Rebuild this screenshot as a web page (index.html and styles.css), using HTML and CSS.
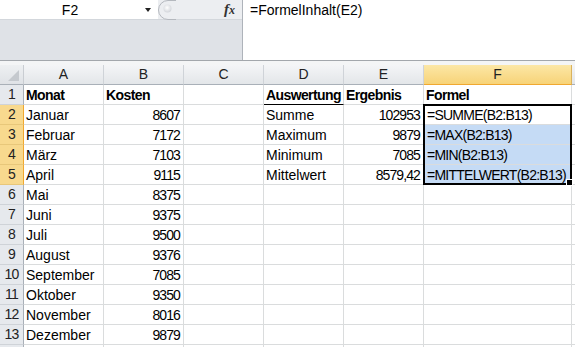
FILE: index.html
```html
<!DOCTYPE html>
<html lang="de">
<head>
<meta charset="utf-8">
<title>Formeln</title>
<link rel="stylesheet" href="styles.css">
</head>
<body>
<div class="app">
  <div class="fbar">
    <div class="fbar-left">
      <div class="fbar-top">
        <div class="namebox"><span class="name">F2</span><span class="drop"></span></div>
        <div class="fxzone">
          <svg class="knob" width="18" height="20" viewBox="0 0 18 20">
            <defs>
              <radialGradient id="kg" cx="0.45" cy="0.4" r="0.6">
                <stop offset="0" stop-color="#ffffff"/>
                <stop offset="1" stop-color="#d2d5da"/>
              </radialGradient>
            </defs>
            <path d="M18 0.5 H10 A9.5 9.5 0 0 0 10 19.5 H18" fill="#eceef1" stroke="#b4b8be"/>
            <circle cx="9.5" cy="8.5" r="4" fill="url(#kg)"/>
          </svg>
          <span class="fx">f<span class="fxx">x</span></span>
        </div>
      </div>
    </div>
    <div class="fbar-text">=FormelInhalt(E2)</div>
  </div>
  <div class="gap"></div>
  <div class="sheet">
    <div class="corner"><span class="tri"></span></div>
    <div class="ch">A</div><div class="ch">B</div><div class="ch">C</div><div class="ch">D</div><div class="ch">E</div><div class="ch sel">F</div><div class="ch"></div>

    <div class="rh">1</div>
    <div class="c b">Monat</div><div class="c b">Kosten</div><div class="c"></div><div class="c b uline">Auswertung</div><div class="c b">Ergebnis</div><div class="c b">Formel</div><div class="c"></div>

    <div class="rh sel">2</div>
    <div class="c">Januar</div><div class="c n">8607</div><div class="c"></div><div class="c">Summe</div><div class="c n">102953</div><div class="c f">=SUMME(B2:B13)</div><div class="c"></div>

    <div class="rh sel">3</div>
    <div class="c">Februar</div><div class="c n">7172</div><div class="c"></div><div class="c">Maximum</div><div class="c n">9879</div><div class="c f hl">=MAX(B2:B13)</div><div class="c"></div>

    <div class="rh sel">4</div>
    <div class="c">März</div><div class="c n">7103</div><div class="c"></div><div class="c">Minimum</div><div class="c n">7085</div><div class="c f hl">=MIN(B2:B13)</div><div class="c"></div>

    <div class="rh sel">5</div>
    <div class="c">April</div><div class="c n">9115</div><div class="c"></div><div class="c">Mittelwert</div><div class="c n">8579,42</div><div class="c f hl">=MITTELWERT(B2:B13)</div><div class="c"></div>

    <div class="rh">6</div>
    <div class="c">Mai</div><div class="c n">8375</div><div class="c"></div><div class="c"></div><div class="c"></div><div class="c"></div><div class="c"></div>

    <div class="rh">7</div>
    <div class="c">Juni</div><div class="c n">9375</div><div class="c"></div><div class="c"></div><div class="c"></div><div class="c"></div><div class="c"></div>

    <div class="rh">8</div>
    <div class="c">Juli</div><div class="c n">9500</div><div class="c"></div><div class="c"></div><div class="c"></div><div class="c"></div><div class="c"></div>

    <div class="rh">9</div>
    <div class="c">August</div><div class="c n">9376</div><div class="c"></div><div class="c"></div><div class="c"></div><div class="c"></div><div class="c"></div>

    <div class="rh">10</div>
    <div class="c">September</div><div class="c n">7085</div><div class="c"></div><div class="c"></div><div class="c"></div><div class="c"></div><div class="c"></div>

    <div class="rh">11</div>
    <div class="c">Oktober</div><div class="c n">9350</div><div class="c"></div><div class="c"></div><div class="c"></div><div class="c"></div><div class="c"></div>

    <div class="rh">12</div>
    <div class="c">November</div><div class="c n">8016</div><div class="c"></div><div class="c"></div><div class="c"></div><div class="c"></div><div class="c"></div>

    <div class="rh">13</div>
    <div class="c">Dezember</div><div class="c n">9879</div><div class="c"></div><div class="c"></div><div class="c"></div><div class="c"></div><div class="c"></div>

    <div class="rh"></div>
    <div class="c"></div><div class="c"></div><div class="c"></div><div class="c"></div><div class="c"></div><div class="c"></div><div class="c"></div>

    <div class="selbox"><span class="handle"></span></div>
  </div>
</div>
</body>
</html>
```
FILE: styles.css
```css
* { box-sizing: border-box; }
html, body { margin: 0; padding: 0; background: #fff; overflow: hidden; }
body { width: 575px; height: 347px; font-family: "Liberation Sans", Arial, sans-serif; font-size: 14px; color: #000; }

.app { display: flex; flex-direction: column; height: 347px; overflow: hidden; }

.fbar { display: flex; flex: none; height: 61px; border-bottom: 1px solid #a3a7ac; }
.fbar-left { width: 243px; background: #dfe2e7; border-right: 1px solid #aeb3ba; }
.fbar-top { display: flex; height: 20px; border-bottom: 1px solid #d3d7dc; }
.namebox { width: 158px; background: #fff; display: flex; align-items: center; }
.name { width: 140px; text-align: center; line-height: 20px; }
.drop { width: 0; height: 0; border-left: 3.5px solid transparent; border-right: 3.5px solid transparent; border-top: 4px solid #222; margin-left: 5px; }
.fxzone { flex: 1; display: flex; align-items: center; background: #eceef1; }
.knob { display: block; flex: none; }
.fx { margin-left: auto; margin-right: 7px; font-family: "Liberation Serif", serif; font-style: italic; font-weight: bold; font-size: 15px; color: #333; line-height: 20px; }
.fxx { font-size: 12px; }
.fbar-text { flex: 1; background: #fff; padding: 2px 0 0 7px; line-height: 17px; }

.gap { flex: none; height: 4px; background: #f4f5f6; }

.sheet { flex: none; display: grid; grid-template-columns: 24px repeat(5, 80px) 148px 1fr; grid-auto-rows: 20px; position: relative; }

.corner { background: linear-gradient(#eef0f2, #dfe2e6); border-right: 1px solid #c9cdd2; border-bottom: 1px solid #a9b0b8; position: relative; }
.tri { position: absolute; right: 4px; bottom: 3px; width: 0; height: 0; border-left: 11px solid transparent; border-bottom: 11px solid #c5c9ce; }

.ch { background: linear-gradient(#f4f5f7, #e3e6e9); border-right: 1px solid #cfd3d8; border-bottom: 1px solid #a9b0b8; text-align: center; line-height: 19px; color: #222; }
.ch.sel { background: linear-gradient(#fce7a6, #f7d378); border-bottom-color: #f0a830; border-right-color: #d9b25e; }

.rh { background: #e6e9ed; border-right: 1px solid #a9b0b8; border-bottom: 1px solid #cfd3d8; text-align: center; line-height: 19px; color: #222; letter-spacing: -0.8px; }
.rh.sel { background: #f8d98e; border-right-color: #f0a830; border-bottom-color: #e8c77a; }

.c { border-right: 1px solid #dadcdd; border-bottom: 1px solid #dadcdd; display: flex; align-items: flex-end; padding: 0 3px 1px 2px; line-height: 16px; white-space: nowrap; }
.c.n { justify-content: flex-end; letter-spacing: -0.9px; padding-right: 3px; }
.c.b { font-weight: bold; letter-spacing: -0.6px; }
.c.f { letter-spacing: -0.75px; padding-left: 3px; }
.c.uline { border-bottom-color: #000; }
.c.hl { background: #c5dbf5; }

.selbox { position: absolute; left: 423px; top: 39px; width: 149px; height: 81px; border: 2px solid #000; pointer-events: none; }
.handle { position: absolute; right: -3px; bottom: -3px; width: 5px; height: 5px; background: #000; border: 1px solid #fff; box-sizing: content-box; }
```
